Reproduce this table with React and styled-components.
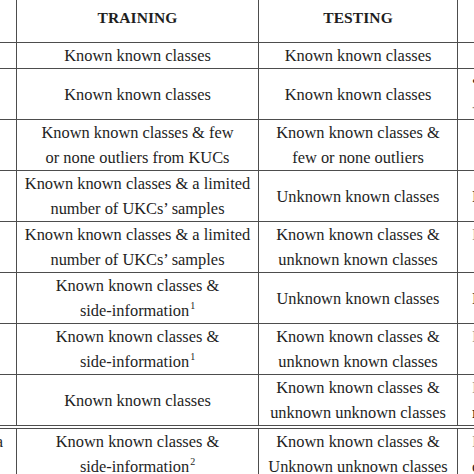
import React from 'react';
import styled, { createGlobalStyle } from 'styled-components';

const GlobalStyle = createGlobalStyle`
  html, body {
    margin: 0;
    padding: 0;
    background: #ffffff;
    overflow: hidden;
  }
  body {
    width: 474px;
    height: 474px;
    font-family: "Liberation Serif", "Times New Roman", serif;
    color: #1e1e1e;
  }
`;

const Viewport = styled.div`
  width: 474px;
  height: 474px;
  overflow: hidden;
`;

const Table = styled.table`
  border-collapse: collapse;
  table-layout: fixed;
  margin-top: -9px;
  margin-left: -184px;
  width: 741px;
`;

const HeadCell = styled.th`
  height: 48px;
  padding: 2px 0 0;
  border: 1.5px solid #4d4d4d;
  font-size: 15.5px;
  font-weight: 700;
  text-align: center;
  vertical-align: middle;
  letter-spacing: 0.1px;
`;

const Cell = styled.td`
  height: ${p => p.$h}px;
  padding: 0 ${p => (p.$side ? '13px' : '4px')} 0 ${p => (p.$edge ? '14px' : '4px')};
  border-left: 1.5px solid #4d4d4d;
  border-right: 1.5px solid #4d4d4d;
  border-top: 1.5px solid #4d4d4d;
  border-bottom: ${p => (p.$double ? '4px double #4d4d4d' : '1.5px solid #4d4d4d')};
  font-size: 16.4px;
  line-height: 25px;
  text-align: ${p => (p.$side ? 'right' : p.$edge ? 'left' : 'center')};
  vertical-align: middle;
  white-space: ${p => (p.$edge || p.$side ? 'nowrap' : 'normal')};
  overflow: hidden;
`;

const Line = styled.span`
  display: block;
`;

const EdgeLine = styled.span`
  display: block;
  font-weight: ${p => (p.$bold ? 700 : 400)};
  color: ${p => (p.$faint ? '#8c8c8c' : '#1e1e1e')};
`;

const Sup = styled.sup`
  font-size: 10px;
  line-height: 0;
  vertical-align: 7px;
  margin-left: 1px;
`;

// edge: text of the next (cropped) column, one entry per line: [text, bold, faint]
const rows = [
  { h: 24, train: ['Known known classes'], test: ['Known known classes'] },
  { h: 48.5, train: ['Known known classes'], test: ['Known known classes'], edge: [['• Known', false, false], ['- Unknown', false, true]] },
  { h: 49, train: ['Known known classes & few', 'or none outliers from KUCs'], test: ['Known known classes &', 'few or none outliers'] },
  { h: 48.5, train: ['Known known classes & a limited', 'number of UKCs\u2019 samples'], test: ['Unknown known classes'], edge: [['Identify', true, false]] },
  { h: 48.5, train: ['Known known classes & a limited', 'number of UKCs\u2019 samples'], test: ['Known known classes &', 'unknown known classes'], edge: [['Identify', false, true], ['\u00a0', false, false]] },
  { h: 47.5, train: ['Known known classes &', 'side-information'], sup: '1', test: ['Unknown known classes'], edge: [['Identify', true, false]] },
  { h: 47.5, train: ['Known known classes &', 'side-information'], sup: '1', test: ['Known known classes &', 'unknown known classes'], edge: [['Identify', false, true], ['\u00a0', false, false]] },
  { h: 47.5, train: ['Known known classes'], test: ['Known known classes &', 'unknown unknown classes'], edge: [['Identify', false, true], ['rejecting', true, false]], double: true },
  { h: 50, train: ['Known known classes &', 'side-information'], sup: '2', test: ['Known known classes &', 'Unknown unknown classes'], edge: [['Identify', false, true], ['cluster', false, false]], side: 'Zero-shot data' },
];

export default function App() {
  return (
    <Viewport>
      <GlobalStyle />
      <Table>
        <colgroup>
          <col style={{ width: 200 }} />
          <col style={{ width: 242 }} />
          <col style={{ width: 199 }} />
          <col style={{ width: 100 }} />
        </colgroup>
        <thead>
          <tr>
            <HeadCell />
            <HeadCell>TRAINING</HeadCell>
            <HeadCell>TESTING</HeadCell>
            <HeadCell />
          </tr>
        </thead>
        <tbody>
          {rows.map((row, i) => (
            <tr key={i}>
              <Cell $h={row.h} $side={!!row.side} $double={row.double}>
                {row.side ? (
                  <>
                    <Line>{row.side}</Line>
                    <Line>{'\u00a0'}</Line>
                  </>
                ) : null}
              </Cell>
              <Cell $h={row.h} $double={row.double}>
                {row.train.map((t, j) => (
                  <Line key={j}>
                    {t}
                    {row.sup && j === row.train.length - 1 ? <Sup>{row.sup}</Sup> : null}
                  </Line>
                ))}
              </Cell>
              <Cell $h={row.h} $double={row.double}>
                {row.test.map((t, j) => (
                  <Line key={j}>{t}</Line>
                ))}
              </Cell>
              <Cell $h={row.h} $edge $double={row.double}>
                {(row.edge || []).map(([t, bold, faint], j) => (
                  <EdgeLine key={j} $bold={bold} $faint={faint}>
                    {t}
                  </EdgeLine>
                ))}
              </Cell>
            </tr>
          ))}
        </tbody>
      </Table>
    </Viewport>
  );
}
